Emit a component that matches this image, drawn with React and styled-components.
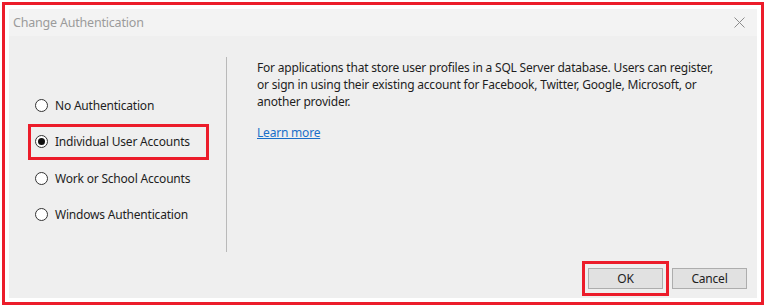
import styled, { createGlobalStyle } from "styled-components";

const Global = createGlobalStyle`
  html, body {
    margin: 0;
    padding: 0;
    background: #ffffff;
  }
  body {
    font-family: "Noto Sans", "Open Sans", sans-serif;
    font-size: 12px;
    letter-spacing: -0.2px;
  }
`;

const Frame = styled.div`
  margin: 2px 0 0 2px;
  width: 762px;
  box-sizing: border-box;
  border: 3px solid #ec1c2a;
  padding: 4px;
  background: #ffffff;
`;

const Dialog = styled.div`
  height: 289px;
  background: #efefef;
  display: flex;
  flex-direction: column;
`;

const TitleBar = styled.div`
  height: 27px;
  background: #f3f3f3;
  display: flex;
  align-items: center;
  justify-content: space-between;
  padding: 0 10px 0 4px;
`;

const Title = styled.span`
  color: #9b9b9b;
  font-size: 12.5px;
`;

const Close = styled.button`
  width: 16px;
  height: 16px;
  border: 0;
  padding: 0;
  background: transparent;
  display: flex;
  align-items: center;
  justify-content: center;
`;

const Body = styled.div`
  flex: 1;
  display: flex;
  flex-direction: column;
  padding-top: 21px;
`;

const Content = styled.div`
  height: 195px;
  display: flex;
`;

const Options = styled.div`
  width: 218px;
  box-sizing: border-box;
  padding: 30px 0 0 19px;
  border-right: 1px solid #b9b9b9;
`;

const Option = styled.label`
  width: 181px;
  height: 36.5px;
  box-sizing: border-box;
  border: 3px solid ${(p) => (p.$marked ? "#ec1c2a" : "transparent")};
  padding-left: 4px;
  display: flex;
  align-items: center;
  gap: 7px;
  color: #1e1e1e;
`;

const Radio = styled.span`
  width: 13px;
  height: 13px;
  box-sizing: border-box;
  border-radius: 50%;
  border: 1px solid #333333;
  background: #ffffff;
  display: flex;
  align-items: center;
  justify-content: center;
  &::after {
    content: "";
    width: 7px;
    height: 7px;
    border-radius: 50%;
    background: ${(p) => (p.$checked ? "#111111" : "transparent")};
  }
`;

const Description = styled.div`
  flex: 1;
  padding: 2px 0 0 30px;
  color: #1e1e1e;
  line-height: 17px;
`;

const Link = styled.a`
  display: inline-block;
  margin-top: 14px;
  color: #1a6fc9;
  text-decoration: underline;
`;

const Footer = styled.div`
  margin-top: 9px;
  padding: 0 10px 1px 0;
  display: flex;
  justify-content: flex-end;
  align-items: center;
  gap: 3px;
`;

const Highlight = styled.div`
  border: 3px solid #ec1c2a;
  padding: 4px 3px;
`;

const Button = styled.button`
  width: 75px;
  height: 21px;
  box-sizing: border-box;
  border: 1px solid #adadad;
  background: #e1e1e1;
  font-family: inherit;
  font-size: 12px;
  letter-spacing: inherit;
  color: #1e1e1e;
  padding: 0;
`;

const options = [
  { label: "No Authentication" },
  { label: "Individual User Accounts", checked: true },
  { label: "Work or School Accounts" },
  { label: "Windows Authentication" },
];

export default function App() {
  return (
    <>
      <Global />
      <Frame>
        <Dialog>
          <TitleBar>
            <Title>Change Authentication</Title>
            <Close aria-label="Close">
              <svg width="11" height="11" viewBox="0 0 11 11">
                <path d="M0.5 0.5 L10.5 10.5 M10.5 0.5 L0.5 10.5" stroke="#8c8c8c" strokeWidth="1" />
              </svg>
            </Close>
          </TitleBar>
          <Body>
            <Content>
              <Options>
                {options.map((o) => (
                  <Option key={o.label} $marked={o.checked}>
                    <Radio $checked={o.checked} />
                    {o.label}
                  </Option>
                ))}
              </Options>
              <Description>
                For applications that store user profiles in a SQL Server database. Users can register,
                <br />
                or sign in using their existing account for Facebook, Twitter, Google, Microsoft, or
                <br />
                another provider.
                <br />
                <Link href="#">Learn more</Link>
              </Description>
            </Content>
            <Footer>
              <Highlight>
                <Button>OK</Button>
              </Highlight>
              <Button>Cancel</Button>
            </Footer>
          </Body>
        </Dialog>
      </Frame>
    </>
  );
}
